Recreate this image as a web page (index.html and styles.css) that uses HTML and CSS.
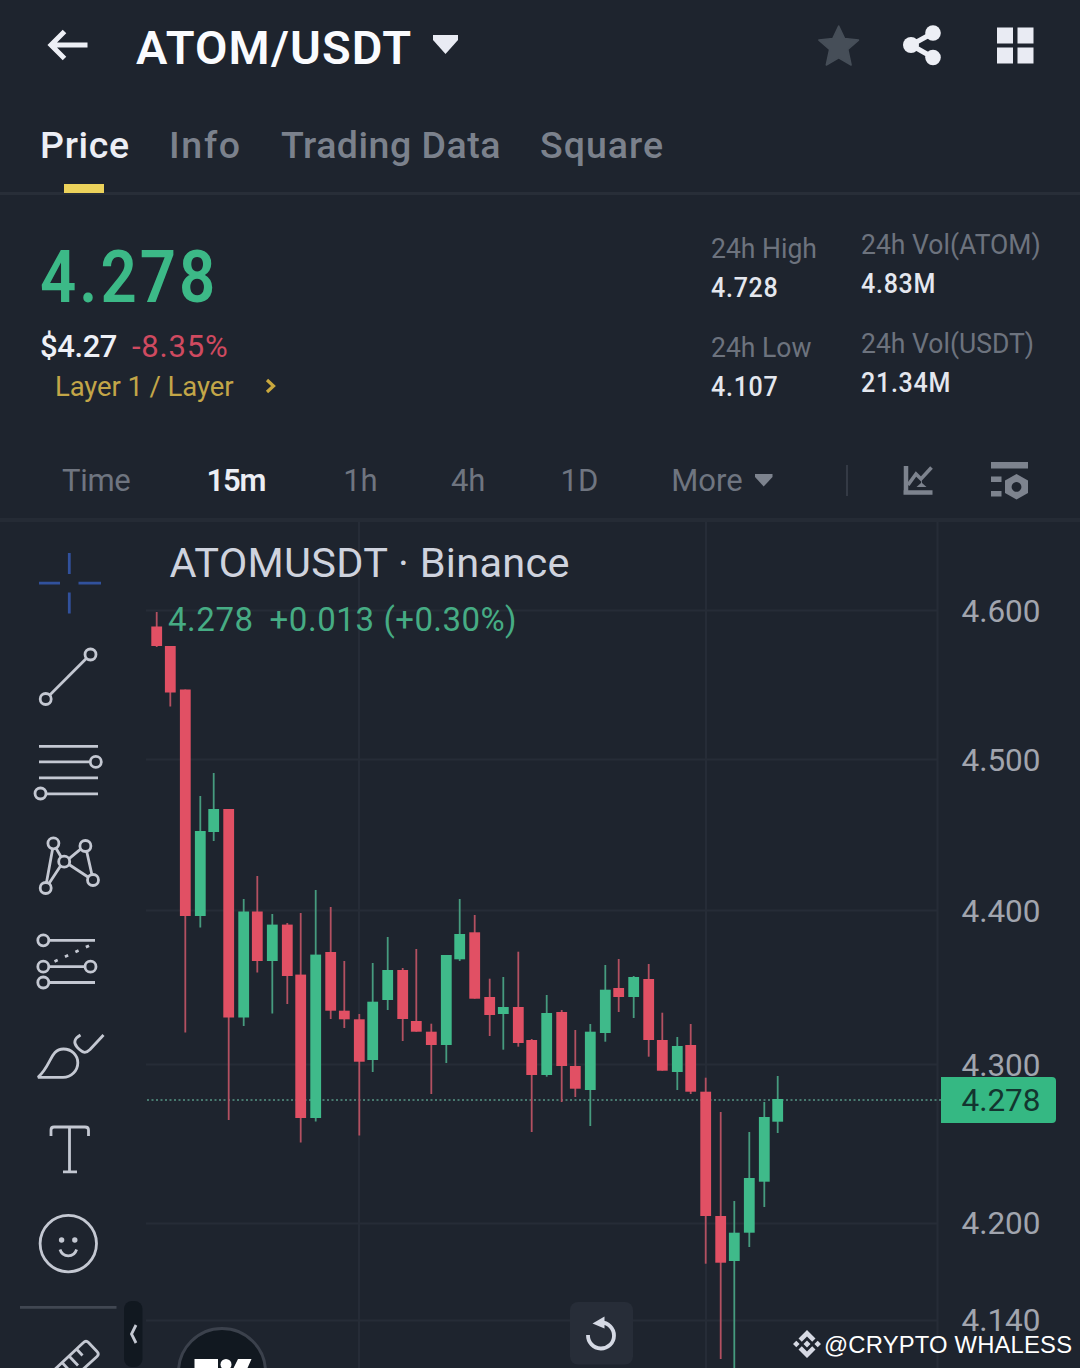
FILE: index.html
```html
<!DOCTYPE html>
<html lang="en">
<head>
<meta charset="utf-8">
<title>ATOM/USDT</title>
<link rel="stylesheet" href="styles.css">
</head>
<body>
<div class="app">
  <header class="header">
    <svg class="back" width="42" height="34" viewBox="46 28 42 34"><path d="M86.500 45H51M63.500 31.500L50 45l13.500 13.500" /></svg>
    <h1 class="pair">ATOM/USDT</h1>
    <svg class="pair-caret" width="26" height="20" viewBox="433 36 26 20"><path d="M433 36h25v5L445.500 55 433 41z"/></svg>
    <div class="actions">
      <svg width="42" height="42" viewBox="818 25 42 42"><path fill="#464e58" stroke="#464e58" stroke-width="1.500" stroke-linejoin="round" d="M838.700 27l5.800 12.400 14 1.700-10.700 9.400 3.300 15.500-12.400-7.100-12.400 7.100 3.300-15.500-10.700-9.400 14-1.700z"/></svg>
      <svg width="40" height="42" viewBox="902 24 40 42"><g fill="#edeff5"><circle cx="911" cy="45" r="8"/><circle cx="933" cy="33" r="7.800"/><circle cx="933" cy="57.500" r="7.800"/></g><path d="M933 33L911 45l22 12.500" fill="none" stroke="#edeff5" stroke-width="5"/></svg>
      <svg width="37" height="37" viewBox="0 0 37 37"><path fill="#e9ebf3" d="M0 .5h16v16H0zM20.500.5h16v16h-16zM0 20.500h16v16H0zM20.500 20.500h16v16h-16z"/></svg>
    </div>
  </header>

  <nav class="tabs">
    <a class="tab tab-price active">Price</a>
    <a class="tab tab-info">Info</a>
    <a class="tab tab-data">Trading Data</a>
    <a class="tab tab-square">Square</a>
  </nav>

  <section class="summary">
    <div class="quote">
      <div class="last">4.278</div>
      <div class="change"><span class="usd">$4.27</span><span class="pct">-8.35%</span></div>
      <div class="sector"><span class="sector-name">Layer 1 / Layer</span><svg width="12" height="18" viewBox="0 0 12 18"><path d="M2 3l6.500 6L2 15" fill="none" stroke="#c9a83e" stroke-width="3.200"/></svg></div>
    </div>
    <dl class="stats stats-price">
      <dt>24h High</dt><dd>4.728</dd>
      <dt>24h Low</dt><dd>4.107</dd>
    </dl>
    <dl class="stats stats-volume">
      <dt>24h Vol(ATOM)</dt><dd>4.83M</dd>
      <dt>24h Vol(USDT)</dt><dd>21.34M</dd>
    </dl>
  </section>

  <div class="intervals">
    <span class="iv iv-time">Time</span>
    <span class="iv iv-15m on">15m</span>
    <span class="iv iv-1h">1h</span>
    <span class="iv iv-4h">4h</span>
    <span class="iv iv-1d">1D</span>
    <span class="iv iv-more">More</span>
    <svg class="iv-caret" width="18" height="13" viewBox="0 0 18 13"><path d="M0 0h17.500v3L8.700 12.500 0 3z" fill="#7d838e"/></svg>
    <span class="divider"></span>
    <svg class="iv-chart" width="30" height="30" viewBox="903 464 30 30"><path d="M906 464v27M903.500 490.500H932.500" stroke="#7d838e" stroke-width="4.500" fill="none"/><path d="M908 483l8-11 5 5 10.500-11.500" stroke="#7d838e" stroke-width="3.600" fill="none"/><path d="M916.500 485l4.500-4v-6l1 6 4.500 4z" fill="#7d838e"/></svg>
    <svg class="iv-settings" width="38" height="40" viewBox="991 460 38 40"><path d="M991 461h37v6.500h-37zM991 475.500h10.500v5.500H991zM991 490h10.500v5.500H991z" fill="#7d838e"/><path fill="#7d838e" fill-rule="evenodd" d="M1016.500 473l11.500 6.500v12.500l-11.500 6.500-11.500-6.500v-12.500zm0 8a4.900 4.900 0 1 0 .01 0z"/></svg>
  </div>

  <main class="chart">
    <aside class="tools">
      <svg height="108" viewBox="0 522 146 108"><path stroke="#31519c" stroke-width="2.800" d="M69.300 553v21M69.300 592.500v21M39 583.200h21M78.500 583.200H101"/></svg>
      <svg height="94" viewBox="0 630 146 94"><path d="M49.800 695L86.500 658.300"/><circle cx="45.700" cy="699" r="5.500"/><circle cx="90.500" cy="654.500" r="5.500"/></svg>
      <svg height="94" viewBox="0 724 146 94"><path d="M39 746.300h59M39 761.800h51M39 777.800h59M46 793.800h52"/><circle cx="95.800" cy="761.800" r="5.500"/><circle cx="40.500" cy="793.500" r="5.500"/></svg>
      <svg height="96" viewBox="0 818 146 96"><path d="M52.600 849L46.500 882.500M56 848.300l5 8.500M68.800 858.800l11.500-9.500M86.700 851.500l5.200 23M69 864.500l19 12.500M60.500 866l-11.500 17.500"/><circle cx="53.400" cy="843.300" r="5.500"/><circle cx="85.400" cy="846" r="5.500"/><circle cx="64.200" cy="861.700" r="5.500"/><circle cx="45.700" cy="888" r="5.500"/><circle cx="93" cy="880" r="5.500"/></svg>
      <svg height="94" viewBox="0 914 146 94"><path d="M49 940.300h46M49 966.700h36M49 982.500h46"/><circle cx="43.300" cy="940.300" r="5.500"/><circle cx="43.300" cy="966.700" r="5.500"/><circle cx="90.500" cy="966.700" r="5.500"/><circle cx="43.300" cy="982.500" r="5.500"/><path stroke-dasharray="3.500 8" d="M54.500 961.500l36-16.500"/></svg>
      <svg height="94" viewBox="0 1008 146 94"><path stroke-linejoin="bevel" d="M38 1077.300C52 1065 50 1049 63.500 1049c8 0 14.300 6 14.300 13.700 0 8-6.500 14.600-14.800 14.600zM80.500 1035c-6 3.500-7.500 7.500-3.500 12 5.500 6 8.500 7 13 2.500L103.500 1035"/></svg>
      <svg height="94" viewBox="0 1102 146 94"><path d="M51 1136v-6q0-3 3-3h31q3.500 0 3.500 3v6M69.500 1127v44.500M63 1171.800h14"/></svg>
      <svg height="100" viewBox="0 1196 146 100"><circle cx="68.300" cy="1243.600" r="28.200"/><path d="M60 1249.500q2 6.300 8.300 6.300t8.300-6.300"/><circle class="eye" cx="61.600" cy="1240" r="2.700"/><circle class="eye" cx="74.800" cy="1240" r="2.700"/></svg>
      <svg height="72" viewBox="0 1296 146 72"><path class="rule" d="M20 1307.300h96.500"/><path d="M52 1372l31.500-29.500q2.500-2.500 5 0l8.500 9q2.500 2.500 0 5L80 1372M62.500 1363l5.500 6M69.500 1356.500l8.500 9M77 1349.500l5.500 6"/><rect class="pill" x="124" y="1301" width="18.500" height="66" rx="8"/><path d="M136 1325l-4.500 9 4.500 9"/></svg>
    </aside>
    <svg class="plot" width="934" height="846" viewBox="146 522 934 846">
      <g class="grid">
        <path d="M359 522v846M706 522v846M937.500 522v846"/>
        <path d="M146 610.500h791M146 759.500h791M146 910.500h791M146 1064.500h791M146 1223.500h791M146 1320.500h791"/>
      </g>
      <path class="last-line" d="M147 1100h794"/>
      <g id="candles"></g>
      <g class="legend">
        <text class="symbol" x="169.500" y="577" textLength="400">ATOMUSDT · Binance</text>
        <text x="168" y="630.500" textLength="85">4.278</text>
        <text x="269.500" y="630.500" textLength="104.500">+0.013</text>
        <text x="383.500" y="630.500" textLength="133">(+0.30%)</text>
      </g>
      <g class="axis">
        <text x="961.500" y="622" textLength="79">4.600</text>
        <text x="961.500" y="770.500" textLength="79">4.500</text>
        <text x="961.500" y="922" textLength="79">4.400</text>
        <text x="961.500" y="1076" textLength="79">4.300</text>
        <text x="961.500" y="1234" textLength="79">4.200</text>
        <text x="961.500" y="1331" textLength="79">4.140</text>
      </g>
      <path class="tag" d="M941 1077h111q4 0 4 4v38q0 4-4 4H941z"/>
      <text class="tag-text" x="961.500" y="1111" textLength="79">4.278</text>
      <circle cx="222" cy="1372" r="43.500" fill="#111820" stroke="#3b414c" stroke-width="3"/>
      <path fill="#fff" d="M194.500 1359H218v9h-23.500zM238 1359h13.500l-4 9h-14z"/><circle cx="226" cy="1364.500" r="5.500" fill="#fff"/>
      <rect x="570" y="1302" width="63" height="62.500" rx="8" fill="#272d38"/>
      <path d="M588 1335a13 13 0 1 0 13-12.500" fill="none" stroke="#d5d9e4" stroke-width="3.800"/>
      <path d="M592.500 1323.500l12-7v12z" fill="#d5d9e4"/>
      <g class="watermark">
        <g transform="translate(807 1344)" fill="#d6d9e3"><path d="M0-14L8.500-5.500 5.200-2.200 0-7.400-5.200-2.200-8.500-5.500zM0 14L8.500 5.500 5.200 2.200 0 7.400-5.200 2.200-8.500 5.500zM-14 0l3.300-3.300L-7.400 0l-3.300 3.300zM14 0l-3.300-3.300L7.400 0l3.300 3.300zM0-3.500L3.500 0 0 3.500-3.500 0z"/></g>
        <text x="824" y="1353" textLength="248">@CRYPTO WHALESS</text>
      </g>
    </svg>
  </main>
</div>
<script src="chart.js"></script>
</body>
</html>
```
FILE: styles.css
```css
* { box-sizing: border-box; }
body { margin: 0; background: #1e242e; font-family: Roboto, "Liberation Sans", sans-serif; }
.app { width: 1080px; height: 1368px; overflow: hidden; display: flex; flex-direction: column; }
svg { display: block; flex: none; }

.header { height: 92px; padding: 0 46px 2px 47px; display: flex; align-items: center; }
.back { fill: none; stroke: #edeff5; stroke-width: 5; }
.pair { margin: 5px 0 0 47px; width: 275px; font-size: 47px; line-height: 56px; font-weight: 600; color: #fafbfe; white-space: nowrap; letter-spacing: 1.150px; }
.pair-caret { margin-left: 22px; fill: #e9ebf3; }
.actions { margin-left: auto; display: flex; align-items: center; gap: 42px; }
.actions svg:last-child { margin-left: 13px; }

.tabs { height: 103px; border-bottom: 3px solid #282e38; padding: 29px 0 0 40px; display: flex; font-size: 37.500px; line-height: 48px; font-weight: 500; color: #7b818c; }
.tab { position: relative; white-space: nowrap; }
.tab-price { width: 129px; letter-spacing: .7px; }
.tab-info { width: 112px; letter-spacing: 1.700px; }
.tab-data { width: 259px; letter-spacing: .5px; }
.tab-square { letter-spacing: 1px; }
.tab.active { color: #eceef5; }
.tab.active::after { content: ""; position: absolute; left: 24px; top: 63px; width: 40px; height: 9px; background: #ecd25b; }

.summary { height: 251px; display: flex; padding: 0 0 0 40px; }
.quote { width: 671px; padding-top: 40px; }
.last { font-size: 73px; line-height: 84px; font-weight: 600; color: #3cb987; letter-spacing: 3.500px; transform: scaleX(.87); transform-origin: left; }
.change { display: flex; height: 42px; align-items: center; font-size: 31px; margin-top: 6px; }
.usd { width: 92px; color: #eef0f6; font-weight: 500; letter-spacing: -.4px; }
.pct { color: #cf4a60; letter-spacing: .8px; }
.sector { display: flex; align-items: center; height: 38px; padding-left: 15px; color: #c3a648; font-size: 27.500px; }
.sector-name { width: 210px; white-space: nowrap; letter-spacing: -.1px; }
.stats { margin: 0; padding-top: 34px; font-size: 27.500px; line-height: 39px; white-space: nowrap; }
.stats-price { width: 150px; }
.stats-volume { padding-top: 29.500px; }
.stats dt { color: #6d737e; transform: scaleX(.965); transform-origin: left; }
.stats dd { margin: 0 0 21px; color: #e4e7ee; font-weight: 500; letter-spacing: .8px; transform: scaleX(.91); transform-origin: left; }

.intervals { height: 76px; border-bottom: 4px solid #252b35; padding: 0 51px 3px 62px; display: flex; align-items: center; font-size: 31px; color: #6f7580; }
.iv { white-space: nowrap; }
.iv-time { width: 145px; letter-spacing: -.3px; }
.iv-15m { width: 137px; }
.iv-1h { width: 108px; }
.iv-4h { width: 110px; }
.iv-1d { width: 111px; }
.iv-more { width: 84px; }
.iv.on { color: #eceef5; font-weight: 600; letter-spacing: -1.200px; }
.divider { width: 2px; height: 31px; margin: 0 55px 0 73px; background: #343a45; }
.iv-settings { margin-left: 58px; }

.chart { height: 846px; display: flex; }
.tools { width: 146px; display: flex; flex-direction: column; }
.tools svg { width: 146px; fill: none; stroke: #c4c8d2; stroke-width: 2.800; }
.tools .eye { fill: #c4c8d2; stroke: none; }
.tools .rule { stroke: #414752; }
.tools .pill { fill: #111820; stroke: none; }
.grid { stroke: #262c37; stroke-width: 2; }
.last-line { stroke: #47796f; stroke-width: 2; stroke-dasharray: 2 2.500; }
.up { fill: #3fba8a; }
.down { fill: #e15064; }
.wick.up { fill: #469b7e; }
.wick.down { fill: #b35061; }
.legend { font-size: 33px; fill: #46ac84; }
.symbol { font-size: 41.500px; fill: #cfd3de; }
.axis { font-size: 31.500px; fill: #a1a5ae; }
.tag { fill: #35b883; }
.tag-text { font-size: 31.500px; fill: #13352f; }
.watermark text { font-family: "Liberation Sans", Arial, sans-serif; font-size: 23.800px; fill: #fff; }
```
FILE: chart.js
```js
// Each candle: [centre x, wick top, body top, body bottom, wick bottom, direction]
const candles = [
  [156.7,612,626.5,646,647,'down'],[170.3,646,646,692.5,706.5,'down'],[185.3,689.5,689.5,916,1032.5,'down'],
  [200.3,796,831,916,927.5,'up'],[213.7,773,809,832,841,'up'],[228.7,809,809,1017.5,1120,'down'],
  [243.7,899,911.5,1017.5,1026,'up'],[257.3,876,911.5,961,972.5,'down'],[272.3,914,924.6,961,1013.5,'up'],
  [287.3,923,924.6,976,1004,'down'],[300.7,913,974.6,1118,1142.5,'down'],[315.7,890,954.6,1118,1121.5,'up'],
  [330.7,907,952,1010.7,1019,'down'],[344.3,961,1010.7,1019.3,1028,'down'],[359.3,1014,1019.3,1061.7,1135.5,'down'],
  [372.7,963,1001.7,1060,1072,'up'],[387.7,937,970,1000,1010,'up'],[402.7,968,970,1019,1041,'down'],
  [416.3,949,1021,1031.7,1031.7,'down'],[431.3,1023.7,1031.7,1045,1094,'down'],[446.3,955,955,1045,1063,'up'],
  [459.7,899,934,959.3,961,'up'],[474.7,915,932.3,998.7,998.7,'down'],[489.7,978.7,997,1015,1036,'down'],
  [503.3,977,1007,1014,1049.7,'up'],[518.3,951.7,1007,1043,1046.7,'down'],[531.7,1039,1040,1075,1132,'down'],
  [546.7,995,1013,1075,1076.7,'up'],[561.7,1010,1012,1066,1102,'down'],[575.3,1030,1066,1088.7,1097,'down'],
  [590.3,1024,1031.7,1090,1126,'up'],[605.3,965,989.7,1033,1041.7,'up'],[618.7,959,988,997,1012,'down'],
  [633.7,976,977,997,1018,'up'],[648.7,964,979,1040,1056.7,'down'],[662.3,1012.7,1040,1070.7,1070.7,'down'],
  [677.3,1037,1046,1072,1090,'up'],[690.7,1024,1045,1091.7,1094,'down'],[705.7,1077.7,1091.7,1216,1263.7,'down'],
  [720.7,1112,1216,1262.7,1359,'down'],[734.3,1201,1232.7,1261,1368,'up'],[749.3,1132,1178,1232.7,1247,'up'],
  [764.3,1102,1117,1181.7,1207,'up'],[777.7,1076,1099,1121.7,1133,'up'],
];
const layer = document.getElementById('candles');
function bar(x, y, width, height, cls) {
  const r = document.createElementNS('http://www.w3.org/2000/svg', 'rect');
  r.setAttribute('x', x);
  r.setAttribute('y', y);
  r.setAttribute('width', width);
  r.setAttribute('height', height);
  r.setAttribute('class', cls);
  layer.appendChild(r);
}
for (const [x, high, top, bottom, low, dir] of candles) {
  bar(x - 0.9, high, 1.8, low - high, 'wick ' + dir);
  bar(x - 5.4, top, 10.8, bottom - top, dir);
}
```
